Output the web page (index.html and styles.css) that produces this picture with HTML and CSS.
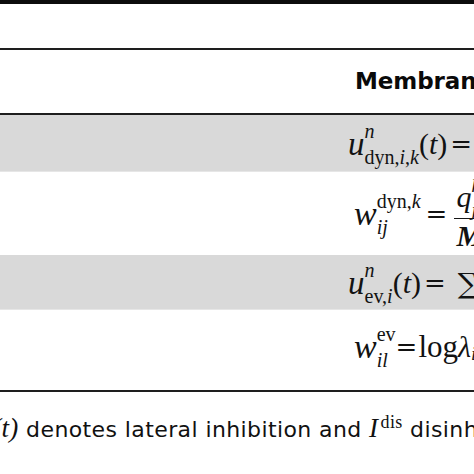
FILE: index.html
```html
<!DOCTYPE html>
<html>
<head>
<meta charset="utf-8">
<link rel="stylesheet" href="styles.css">
</head>
<body>
<div class="page">
  <div class="topbar"></div>
  <div class="caption"></div>
  <div class="rule"></div>
  <div class="row head">
    <div class="c1"></div>
    <div class="c2"><span class="th">Membrane potential</span></div>
  </div>
  <div class="rule"></div>
  <div class="row r1 shade">
    <div class="c1"></div>
    <div class="c2 m">
      <i class="u">u</i><span class="scr"><span class="sp"><i>n</i></span><span class="sb">dyn,<i>i</i>,<i>k</i></span></span><span class="pr">(<i>t</i>)</span><span class="eq">=</span><span class="rest"><i>g</i>(<i>t</i>)</span>
    </div>
  </div>
  <div class="row r2">
    <div class="c1"></div>
    <div class="c2 m">
      <i class="w">w</i><span class="scr"><span class="sp">dyn,<i>k</i></span><span class="sb"><i>ij</i></span></span><span class="eq eq2">=</span><span class="frac"><span class="num"><i>q</i><span class="scr"><span class="sp"><i>k</i></span><span class="sb"><i>j</i></span></span><span class="more">,<i>i</i></span></span><span class="den"><i class="bm">M</i><i>k</i></span></span>
    </div>
  </div>
  <div class="row r3 shade">
    <div class="c1"></div>
    <div class="c2 m">
      <i class="u">u</i><span class="scr"><span class="sp"><i>n</i></span><span class="sb">ev,<i>i</i></span></span><span class="pr">(<i>t</i>)</span><span class="eq eq3">=</span><span class="sum">∑</span>
    </div>
  </div>
  <div class="row r4">
    <div class="c1"></div>
    <div class="c2 m">
      <i class="w">w</i><span class="scr"><span class="sp">ev</span><span class="sb"><i>il</i></span></span><span class="eq eq4">=</span><span class="log">log</span><i>λ</i><span class="sub2"><i>il</i></span>
    </div>
  </div>
  <div class="rule"></div>
  <p class="note"><span class="mi">(t)</span> denotes lateral inhibition and <span class="mi2"><i>I</i><sup>dis</sup></span> disinhibition.</p>
</div>
</body>
</html>
```

FILE: styles.css
```css
html, body {
  margin: 0;
  padding: 0;
  background: #ffffff;
}

.page {
  width: 474px;
  height: 474px;
  overflow: hidden;
  position: relative;
  background: #ffffff;
  color: #111111;
}

.topbar {
  height: 4px;
  background: #0c0c0c;
}

.caption {
  height: 44px;
}

.rule {
  height: 2px;
  background: #1e1e1e;
  width: 900px;
}

.row {
  display: grid;
  grid-template-columns: 347px 600px;
  width: 947px;
  white-space: nowrap;
}

.shade {
  background: #d9d9d9;
  border-bottom: 1px solid #e6e6e6;
}

.head {
  height: 63px;
}

.head .c2 {
  display: flex;
  align-items: flex-start;
  padding-left: 8px;
}

.th {
  font-family: "DejaVu Sans", sans-serif;
  font-weight: bold;
  font-size: 23px;
  line-height: 24px;
  margin-top: 19px;
  color: #0a0a0a;
  letter-spacing: -0.1px;
}

.r1 { height: 56px; }
.r2 { height: 83px; }
.r3 { height: 54px; }
.r4 { height: 80px; }

.m {
  font-family: "Liberation Serif", "Times New Roman", serif;
  font-size: 30px;
  display: flex;
  align-items: center;
  color: #121212;
}

.m i {
  font-style: italic;
}

.u {
  font-size: 33px;
  margin-left: 1px;
}

.scr {
  display: inline-flex;
  flex-direction: column;
  font-size: 20px;
  line-height: 17px;
  margin-left: 0px;
}

.scr .sp {
  transform: translateY(-4px);
}

.scr .sb {
  transform: translateY(5px);
}

.pr {
  margin-left: 0px;
}

.eq {
  font-family: "DejaVu Serif", serif;
  font-size: 26px;
  margin-left: 3px;
  margin-right: 6px;
}

.r1 .c2, .r3 .c2 {
  padding-top: 2px;
}

.w {
  font-size: 34px;
  margin-left: 7px;
}

.eq2 {
  margin-left: 5px;
  margin-right: 7px;
}

.frac {
  display: inline-flex;
  flex-direction: column;
  align-items: flex-start;
  line-height: 30px;
}

.num {
  display: flex;
  align-items: center;
  border-bottom: 1.5px solid #151515;
  padding: 0 2px 0 2px;
}

.num .scr {
  font-size: 19px;
  line-height: 15px;
}

.more {
  font-size: 19px;
  margin-top: 12px;
}

.den {
  padding: 2px 2px 0 2px;
}

.bm {
  font-weight: bold;
}

.sum {
  font-family: "DejaVu Serif", serif;
  font-size: 28px;
  margin-left: 8px;
}

.eq3 {
  margin-right: 4px;
}

.eq4 {
  margin-left: 0px;
  margin-right: 1px;
}

.log {
  font-style: normal;
  font-size: 31px;
}

.sub2 {
  font-size: 19px;
  margin-top: 14px;
}

.r4 .c2 {
  padding-bottom: 6px;
}

.note {
  margin: 23px 0 0 -8px;
  font-family: "DejaVu Sans", sans-serif;
  font-size: 22px;
  line-height: 26px;
  white-space: nowrap;
  color: #111111;
  letter-spacing: 0.4px;
}

.mi {
  font-family: "Liberation Serif", serif;
  font-style: italic;
  font-size: 27px;
}

.mi2 {
  font-family: "Liberation Serif", serif;
  font-size: 27px;
}

.mi2 sup {
  font-size: 18px;
  vertical-align: 9px;
  line-height: 0;
  margin-left: 2px;
}
```
